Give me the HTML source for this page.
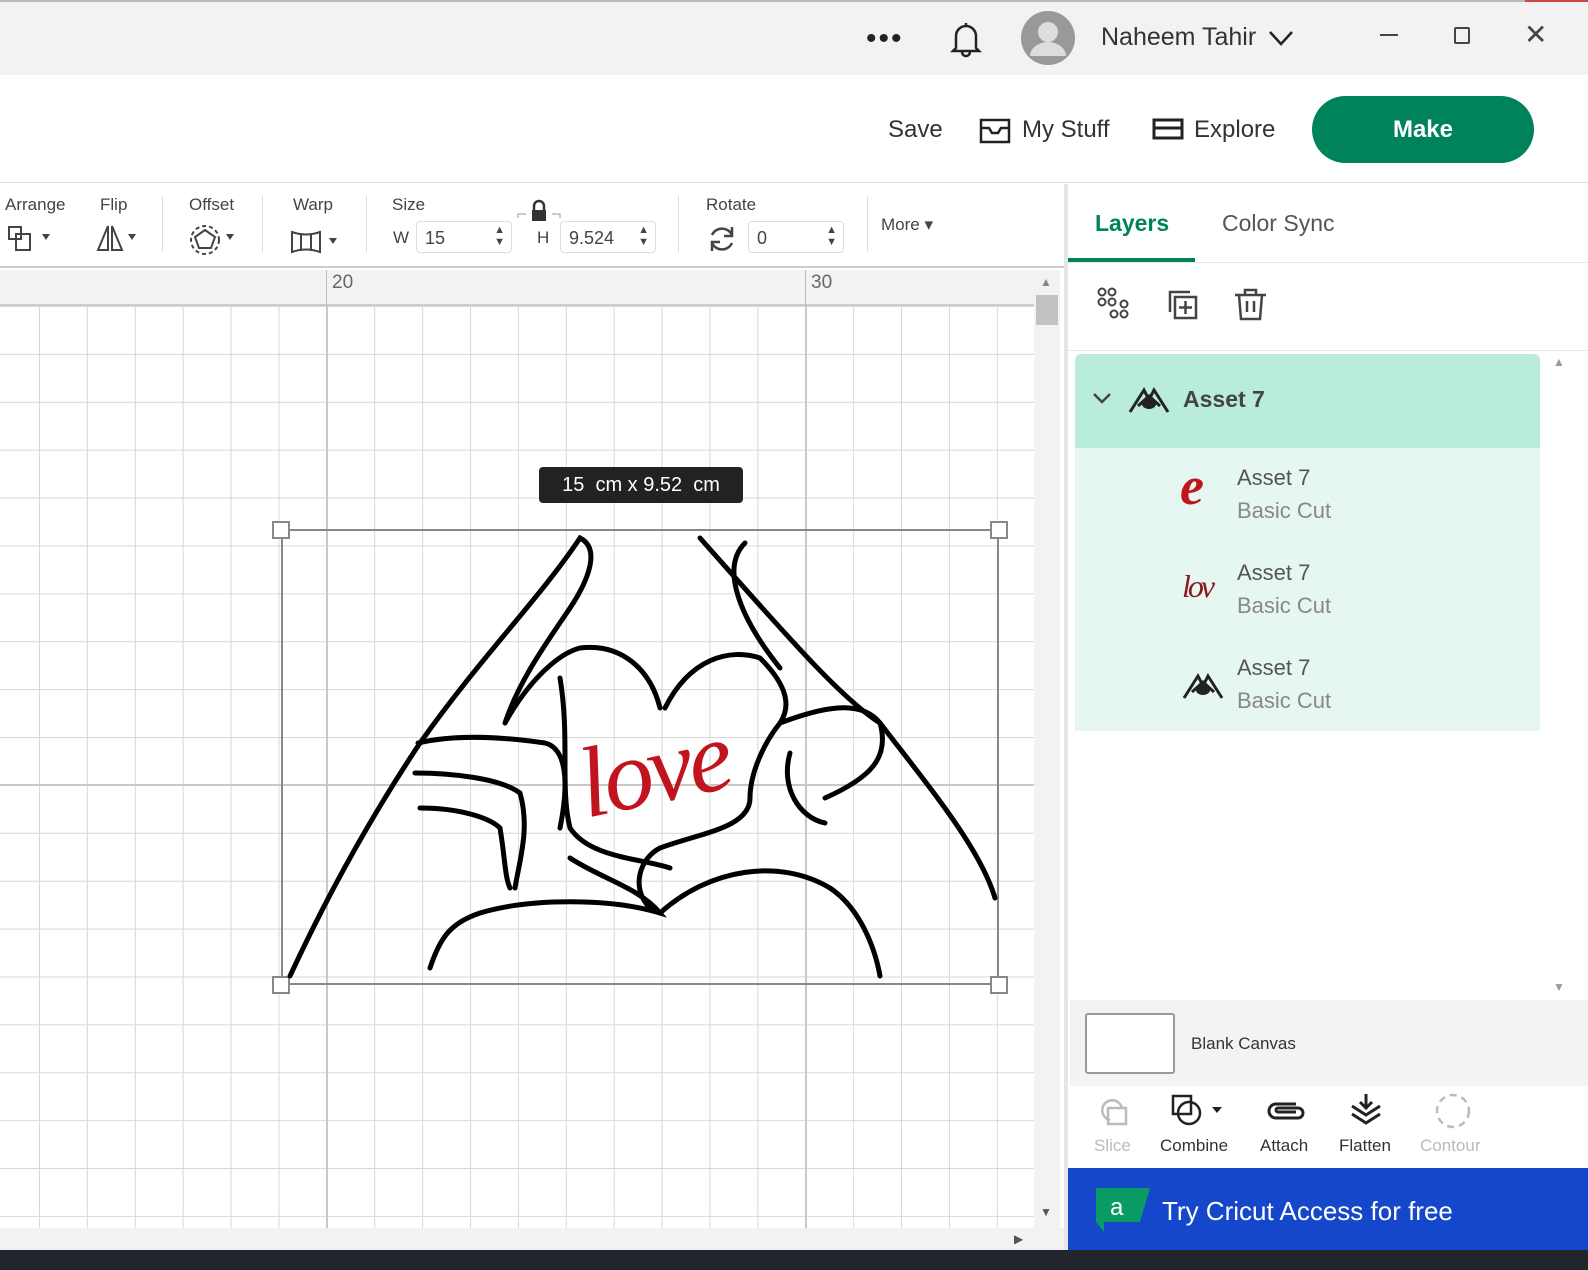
<!DOCTYPE html>
<html><head><meta charset="utf-8"><style>
*{margin:0;padding:0;box-sizing:border-box}
body{width:1588px;height:1270px;overflow:hidden;background:#fff;font-family:"Liberation Sans",sans-serif;color:#333;position:relative}
.abs{position:absolute}
#titlebar{left:0;top:0;width:1588px;height:75px;background:#f2f2f2;border-top:2px solid #bbb}
#header{left:0;top:75px;width:1588px;height:108px;background:#fff;border-bottom:1px solid #ddd}
#toolbar{left:0;top:184px;width:1064px;height:84px;background:#fff;border-bottom:2px solid #ccc}
.lbl{font-size:17px;color:#444}
.sep{width:1px;height:56px;background:#ddd;top:196px}
.inp{border:1px solid #ddd;border-radius:4px;height:32px;font-size:18px;color:#444;padding:6px 8px}
#canvas{left:0;top:270px;width:1034px;height:958px;background:#fff}
#ruler{left:0;top:270px;width:1034px;height:36px;background:#f3f3f3;border-bottom:2px solid #ccc}
#grid{left:0;top:306px;width:1034px;height:922px;
background-image:linear-gradient(to right,#d8d8d8 1px,transparent 1px),linear-gradient(to bottom,#d8d8d8 1px,transparent 1px);
background-size:47.9px 47.9px;background-position:39px 0,0 0}
#panel{left:1064px;top:184px;width:524px;height:1086px;background:#fff;border-left:4px solid #e6e6e6}
.lname{font-size:22px;color:#555}
.lsub{font-size:22px;color:#888}
.btn{font-size:17px;text-align:center;position:absolute;top:1136px}
</style></head><body>
<div class="abs" id="titlebar"></div>
<div class="abs" style="left:866px;top:22px;font-size:30px;color:#222;letter-spacing:2px">•••</div>
<svg class="abs" style="left:946px;top:18px" width="40" height="40" viewBox="0 0 40 40"><path d="M10 30 L10 18 a10 10 0 0 1 20 0 L30 30 L33 33 L7 33 Z M20 5 v3 M16 34 a4 4 0 0 0 8 0" fill="none" stroke="#222" stroke-width="2.5"/></svg>
<svg class="abs" style="left:1020px;top:10px" width="56" height="56" viewBox="0 0 56 56"><circle cx="28" cy="28" r="27" fill="#999"/><circle cx="28" cy="22" r="10" fill="#ddd"/><path d="M10 46 a18 14 0 0 1 36 0 Z" fill="#ddd"/></svg>
<div class="abs" style="left:1101px;top:23px;font-size:25px;color:#333">Naheem Tahir</div>
<svg class="abs" style="left:1268px;top:30px" width="26" height="16"><path d="M2 2 L13 14 L24 2" fill="none" stroke="#222" stroke-width="2.5"/></svg>
<div class="abs" style="left:1380px;top:34px;width:18px;height:2px;background:#444"></div>
<div class="abs" style="left:1454px;top:27px;width:16px;height:17px;border:2px solid #444;border-radius:2px"></div>
<div class="abs" style="left:1524px;top:18px;font-size:28px;color:#444">✕</div>
<div class="abs" style="left:1525px;top:0;width:63px;height:2px;background:#c44"></div>

<div class="abs" id="header"></div>
<div class="abs" style="left:888px;top:116px;font-size:24px;color:#333">Save</div>
<svg class="abs" style="left:978px;top:114px" width="34" height="30"><path d="M3 6 h28 v22 h-28 Z M3 14 h8 l3 5 h6 l3 -5 h8" fill="none" stroke="#222" stroke-width="2.5"/></svg>
<div class="abs" style="left:1022px;top:116px;font-size:24px;color:#333">My Stuff</div>
<svg class="abs" style="left:1150px;top:116px" width="36" height="26"><path d="M4 4 h28 v18 h-28 Z M4 12 h28" fill="none" stroke="#222" stroke-width="3"/></svg>
<div class="abs" style="left:1194px;top:116px;font-size:24px;color:#333">Explore</div>
<div class="abs" style="left:1312px;top:96px;width:222px;height:67px;background:#00835a;border-radius:34px;color:#fff;font-weight:bold;font-size:24px;text-align:center;line-height:67px">Make</div>

<div class="abs" id="toolbar"></div>
<div class="abs lbl" style="left:5px;top:195px">Arrange</div>
<div class="abs lbl" style="left:100px;top:195px">Flip</div>
<div class="abs lbl" style="left:189px;top:195px">Offset</div>
<div class="abs lbl" style="left:293px;top:195px">Warp</div>
<div class="abs lbl" style="left:392px;top:195px">Size</div>
<div class="abs lbl" style="left:706px;top:195px">Rotate</div>
<div class="abs sep" style="left:162px"></div><div class="abs sep" style="left:262px"></div><div class="abs sep" style="left:366px"></div><div class="abs sep" style="left:678px"></div><div class="abs sep" style="left:867px"></div>
<svg class="abs" style="left:6px;top:224px" width="50" height="30"><rect x="3" y="3" width="12" height="12" fill="none" stroke="#444" stroke-width="2"/><rect x="10" y="10" width="14" height="16" fill="none" stroke="#444" stroke-width="2"/><path d="M36 10 l8 0 l-4 6z" fill="#444"/></svg>
<svg class="abs" style="left:94px;top:222px" width="46" height="32"><path d="M4 28 L14 4 L14 28Z M18 4 L28 28 L18 28Z" fill="none" stroke="#444" stroke-width="2"/><path d="M34 12 l8 0 l-4 6z" fill="#444"/></svg>
<svg class="abs" style="left:188px;top:222px" width="50" height="34"><path d="M17 8 L27 15 L23 26 L11 26 L7 15Z" fill="none" stroke="#444" stroke-width="2"/><circle cx="17" cy="18" r="14" fill="none" stroke="#444" stroke-width="2" stroke-dasharray="4 3"/><path d="M38 12 l8 0 l-4 6z" fill="#444"/></svg>
<svg class="abs" style="left:289px;top:228px" width="56" height="28"><path d="M3 4 q14 5 28 0 v20 q-14 -5 -28 0Z M12 6 v17 M22 6 v17" fill="none" stroke="#444" stroke-width="2"/><path d="M40 10 l8 0 l-4 6z" fill="#444"/></svg>
<div class="abs lbl" style="left:393px;top:228px">W</div>
<div class="abs inp" style="left:416px;top:221px;width:96px">15<span style="position:absolute;right:6px;top:2px;font-size:11px;line-height:12px">▲<br>▼</span></div>
<svg class="abs" style="left:514px;top:198px" width="50" height="26"><path d="M4 20 v-4 h8 M46 20 v-4 h-8" stroke="#999" fill="none"/><rect x="18" y="12" width="14" height="11" fill="#333"/><path d="M20 12 v-4 a5 5 0 0 1 10 0 v4" fill="none" stroke="#333" stroke-width="2.5"/></svg>
<div class="abs lbl" style="left:537px;top:228px">H</div>
<div class="abs inp" style="left:560px;top:221px;width:96px">9.524<span style="position:absolute;right:6px;top:2px;font-size:11px;line-height:12px">▲<br>▼</span></div>
<svg class="abs" style="left:706px;top:223px" width="32" height="32"><path d="M26 12 A11 11 0 0 0 6 12 M6 20 A11 11 0 0 0 26 20" fill="none" stroke="#444" stroke-width="2.5"/><path d="M26 4 v9 h-8 M6 28 v-9 h8" fill="none" stroke="#444" stroke-width="2.5"/></svg>
<div class="abs inp" style="left:748px;top:221px;width:96px">0<span style="position:absolute;right:6px;top:2px;font-size:11px;line-height:12px">▲<br>▼</span></div>
<div class="abs" style="left:881px;top:215px;font-size:17px;color:#444">More ▾</div>

<div class="abs" id="canvas"></div>
<div class="abs" id="grid"></div>
<div class="abs" style="left:326px;top:306px;width:2px;height:922px;background:#c8c8c8"></div>
<div class="abs" style="left:805px;top:306px;width:2px;height:922px;background:#c8c8c8"></div>
<div class="abs" style="left:0;top:784px;width:1034px;height:2px;background:#c8c8c8"></div>
<div class="abs" id="ruler"></div>
<div class="abs" style="left:326px;top:270px;width:1px;height:36px;background:#bbb"></div>
<div class="abs" style="left:805px;top:270px;width:1px;height:36px;background:#bbb"></div>
<div class="abs" style="left:332px;top:272px;font-size:19px;color:#666">20</div>
<div class="abs" style="left:811px;top:272px;font-size:19px;color:#666">30</div>
<div class="abs" style="left:1034px;top:270px;width:26px;height:958px;background:#f2f2f2"></div>
<div class="abs" style="left:1036px;top:295px;width:22px;height:30px;background:#c2c2c2"></div>
<div class="abs" style="left:1040px;top:275px;font-size:12px;color:#888">▲</div>
<div class="abs" style="left:1040px;top:1205px;font-size:12px;color:#555">▼</div>
<div class="abs" style="left:0;top:1228px;width:1064px;height:22px;background:#f2f2f2"></div>
<div class="abs" style="left:1014px;top:1232px;font-size:12px;color:#555">▶</div>

<div class="abs" style="left:539px;top:467px;width:204px;height:36px;background:#222;border-radius:4px;color:#fff;font-size:20px;text-align:center;line-height:36px">15&nbsp; cm x 9.52&nbsp; cm</div>
<div class="abs" style="left:281px;top:529px;width:718px;height:456px;border:2px solid #888"></div>
<div class="abs" style="left:272px;top:521px;width:18px;height:18px;border:2px solid #888;background:#fff"></div>
<div class="abs" style="left:990px;top:521px;width:18px;height:18px;border:2px solid #888;background:#fff"></div>
<div class="abs" style="left:272px;top:976px;width:18px;height:18px;border:2px solid #888;background:#fff"></div>
<div class="abs" style="left:990px;top:976px;width:18px;height:18px;border:2px solid #888;background:#fff"></div>
<svg class="abs" style="left:280px;top:528px" width="720" height="458" viewBox="0 0 720 458" fill="none" stroke="#000" stroke-width="5" stroke-linecap="round">
<path d="M10 448 C60 340 110 260 140 215 C200 130 260 70 300 10 C320 20 310 50 290 80 C270 110 240 150 225 195"/>
<path d="M138 215 C180 205 230 210 265 215 C285 220 290 250 280 300"/>
<path d="M135 245 C170 245 220 250 240 265 C250 300 240 330 235 360"/>
<path d="M140 280 C180 280 210 290 220 300 C225 330 225 350 230 360"/>
<path d="M225 195 C250 150 280 125 300 120 C340 115 370 140 380 180"/>
<path d="M280 150 C290 210 280 260 290 300 C310 330 360 330 390 340"/>
<path d="M420 10 C500 100 560 170 600 195 C650 260 700 320 715 370"/>
<path d="M465 15 C440 40 460 90 500 140"/>
<path d="M385 180 C410 130 450 120 480 130 C510 160 510 180 500 195"/>
<path d="M500 195 C540 180 580 170 600 195 C610 230 590 250 545 270"/>
<path d="M510 225 C500 260 520 290 545 295"/>
<path d="M500 195 C480 220 470 250 470 270 C470 300 420 305 380 320 C360 330 350 360 370 380"/>
<path d="M290 330 C320 350 360 360 380 385 C330 370 250 370 200 385 C170 395 160 410 150 440"/>
<path d="M380 385 C430 340 500 330 550 360 C580 380 595 420 600 448"/>
</svg>
<div class="abs" style="left:578px;top:712px;font-family:'Liberation Serif',serif;font-style:italic;font-size:100px;color:#c0151e;transform:rotate(-12deg);letter-spacing:-4px">love</div>

<div class="abs" id="panel"></div>
<div class="abs" style="left:1095px;top:210px;font-size:23px;color:#00835a;font-weight:bold">Layers</div>
<div class="abs" style="left:1068px;top:258px;width:127px;height:4px;background:#00835a"></div>
<div class="abs" style="left:1222px;top:210px;font-size:23px;color:#555">Color Sync</div>
<div class="abs" style="left:1068px;top:262px;width:520px;height:1px;background:#e5e5e5"></div>
<svg class="abs" style="left:1096px;top:286px" width="36" height="36"><g fill="none" stroke="#444" stroke-width="2"><circle cx="6" cy="6" r="3.5"/><circle cx="16" cy="6" r="3.5"/><circle cx="6" cy="16" r="3.5"/><circle cx="16" cy="16" r="3.5"/><circle cx="28" cy="18" r="3.5"/><circle cx="18" cy="28" r="3.5"/><circle cx="28" cy="28" r="3.5"/></g></svg>
<svg class="abs" style="left:1166px;top:288px" width="34" height="34"><g fill="none" stroke="#444" stroke-width="2.5"><path d="M4 24 V4 H24"/><rect x="9" y="9" width="21" height="21"/><path d="M19.5 13 v13 M13 19.5 h13"/></g></svg>
<svg class="abs" style="left:1233px;top:288px" width="36" height="34"><g fill="none" stroke="#444" stroke-width="2.5"><path d="M2 7 H33 M12 7 V2 H23 V7 M6 7 L8 31 H27 L29 7 M14 13 v11 M21 13 v11"/></g></svg>
<div class="abs" style="left:1068px;top:350px;width:520px;height:1px;background:#e5e5e5"></div>
<div class="abs" style="left:1075px;top:354px;width:465px;height:94px;background:#b9ecdd;border-radius:6px 6px 0 0"></div>
<div class="abs" style="left:1075px;top:448px;width:465px;height:283px;background:#e6f6f1"></div>
<svg class="abs" style="left:1092px;top:390px" width="20" height="16"><path d="M2 4 L10 12 L18 4" fill="none" stroke="#444" stroke-width="2.5"/></svg>
<svg class="abs" style="left:1128px;top:384px" width="42" height="30"><path d="M2 28 L16 6 L21 16 L26 6 L40 28 M10 22 L21 12 L32 22" fill="none" stroke="#222" stroke-width="3"/><ellipse cx="21" cy="20" rx="7" ry="5" fill="#222"/></svg>
<div class="abs" style="left:1183px;top:386px;font-size:23px;font-weight:bold;color:#444">Asset 7</div>
<div class="abs" style="left:1180px;top:455px;font-family:'Liberation Serif',serif;font-style:italic;font-weight:bold;font-size:54px;color:#c0151e">e</div>
<div class="abs lname" style="left:1237px;top:465px">Asset 7</div><div class="abs lsub" style="left:1237px;top:498px">Basic Cut</div>
<div class="abs" style="left:1182px;top:568px;font-family:'Liberation Serif',serif;font-style:italic;font-size:32px;color:#8b1a1a;letter-spacing:-3px">lov</div>
<div class="abs lname" style="left:1237px;top:560px">Asset 7</div><div class="abs lsub" style="left:1237px;top:593px">Basic Cut</div>
<svg class="abs" style="left:1182px;top:670px" width="42" height="30"><path d="M2 28 L16 6 L21 16 L26 6 L40 28 M10 22 L21 12 L32 22" fill="none" stroke="#222" stroke-width="3"/><ellipse cx="21" cy="20" rx="7" ry="5" fill="#222"/></svg>
<div class="abs lname" style="left:1237px;top:655px">Asset 7</div><div class="abs lsub" style="left:1237px;top:688px">Basic Cut</div>
<div class="abs" style="left:1553px;top:355px;font-size:12px;color:#999">▲</div>
<div class="abs" style="left:1553px;top:980px;font-size:12px;color:#999">▼</div>

<div class="abs" style="left:1070px;top:1000px;width:518px;height:86px;background:#f3f3f3"></div>
<div class="abs" style="left:1085px;top:1013px;width:90px;height:61px;border:2px solid #999;border-radius:3px;background:#fff"></div>
<div class="abs" style="left:1191px;top:1034px;font-size:17px;color:#333">Blank Canvas</div>
<svg class="abs" style="left:1096px;top:1094px" width="36" height="36"><g fill="none" stroke="#bbb" stroke-width="2.5"><path d="M14 26 A10 10 0 1 1 26 14"/><path d="M12 14 H30 V30 H12Z"/></g></svg>
<svg class="abs" style="left:1170px;top:1093px" width="60" height="36"><g fill="none" stroke="#222" stroke-width="2.5"><rect x="3" y="3" width="18" height="18"/><circle cx="19" cy="20" r="11"/></g><path d="M42 14 l10 0 l-5 6z" fill="#222"/></svg>
<svg class="abs" style="left:1266px;top:1098px" width="40" height="26"><path d="M30 6 H10 a7 7 0 0 0 0 14 H32 a5 5 0 0 0 0 -10 H12 a2 2 0 0 0 0 4 H30" fill="none" stroke="#222" stroke-width="3"/></svg>
<svg class="abs" style="left:1348px;top:1092px" width="36" height="36"><g fill="none" stroke="#222" stroke-width="3"><path d="M18 2 v14 M12 10 l6 6 l6 -6 M4 14 l14 9 l14 -9 M4 22 l14 9 l14 -9"/></g></svg>
<svg class="abs" style="left:1434px;top:1092px" width="38" height="38"><circle cx="19" cy="19" r="16" fill="none" stroke="#bbb" stroke-width="2.5" stroke-dasharray="7 5"/></svg>
<div class="btn" style="left:1094px;color:#bbb">Slice</div>
<div class="btn" style="left:1160px;color:#333">Combine</div>
<div class="btn" style="left:1260px;color:#333">Attach</div>
<div class="btn" style="left:1339px;color:#333">Flatten</div>
<div class="btn" style="left:1420px;color:#bbb">Contour</div>
<div class="abs" style="left:1068px;top:1168px;width:520px;height:82px;background:#1447c9"></div>
<svg class="abs" style="left:1094px;top:1186px" width="58" height="48"><path d="M2 2 H56 L46 36 H2Z M2 36 L10 46 V36" fill="#0a9a63"/><text x="16" y="29" fill="#fff" font-size="24" font-family="Liberation Sans">a</text></svg>
<div class="abs" style="left:1162px;top:1196px;font-size:26px;color:#fff">Try Cricut Access for free</div>
<div class="abs" style="left:0;top:1250px;width:1588px;height:20px;background:#22252c"></div>
</body></html>
